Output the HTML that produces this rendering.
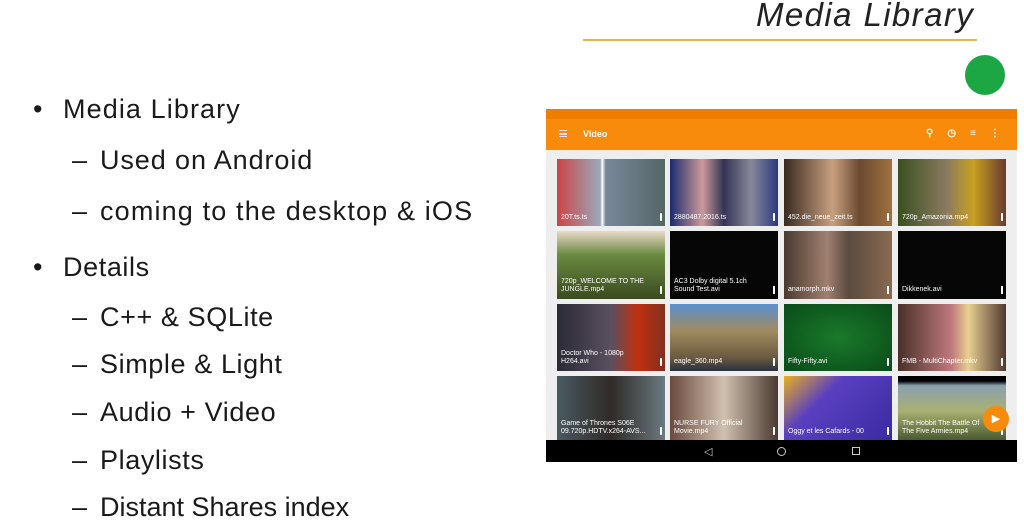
<!DOCTYPE html>
<html><head><meta charset="utf-8"><style>
*{margin:0;padding:0;box-sizing:border-box}
body{width:1024px;height:532px;background:#fff;position:relative;overflow:hidden;font-family:"Liberation Sans",sans-serif;color:#1a1a1a}
.t{position:absolute;white-space:nowrap;font-size:27px;line-height:1;letter-spacing:0.6px}
.title{position:absolute;left:756px;top:-4px;font-size:33px;font-style:italic;color:#222;white-space:nowrap;letter-spacing:1.4px}
.ph{position:absolute;left:546px;top:109px;width:471px;height:353px;background:#eeeeee;overflow:hidden}
.tile{position:absolute;width:108px;overflow:hidden}
.tile span{position:absolute;left:4px;color:#fff;font-size:7px;line-height:8px}
.tile i{position:absolute;right:3px;bottom:5px;width:2px;height:8px;border-top:2px dotted #fff;border-bottom:2px dotted #fff;border-left:2px solid #fff}
</style></head><body>
<div class="title">Media Library</div>
<div style="position:absolute;left:583px;top:39px;width:394px;height:2px;background:#e8b450"></div>
<div style="position:absolute;left:965px;top:55px;width:40px;height:40px;border-radius:50%;background:#1ca744"></div>

<div class="t" style="left:33px;top:96px">•</div><div class="t" style="left:63px;top:96px;letter-spacing:1.1px">Media Library</div>
<div class="t" style="left:72px;top:147px">–</div><div class="t" style="left:100px;top:147px;letter-spacing:0.9px">Used on Android</div>
<div class="t" style="left:72px;top:198px">–</div><div class="t" style="left:100px;top:198px;letter-spacing:1.15px">coming to the desktop &amp; iOS</div>
<div class="t" style="left:33px;top:254px">•</div><div class="t" style="left:63px;top:254px">Details</div>
<div class="t" style="left:72px;top:304px">–</div><div class="t" style="left:100px;top:304px">C++ &amp; SQLite</div>
<div class="t" style="left:72px;top:351px">–</div><div class="t" style="left:100px;top:351px">Simple &amp; Light</div>
<div class="t" style="left:72px;top:399px">–</div><div class="t" style="left:100px;top:399px">Audio + Video</div>
<div class="t" style="left:72px;top:447px">–</div><div class="t" style="left:100px;top:447px">Playlists</div>
<div class="t" style="left:72px;top:494px">–</div><div class="t" style="left:100px;top:494px;letter-spacing:0">Distant Shares index</div>

<div class="ph">
<div style="position:absolute;left:0;top:0;width:471px;height:10px;background:#f07c00"></div>
<div style="position:absolute;left:0;top:10px;width:471px;height:31px;background:#f88a0c"></div>
<div style="position:absolute;left:13px;top:21px;width:8px;height:7px;border-top:1.5px solid #fde;border-bottom:1.5px solid #fde"></div>
<div style="position:absolute;left:13px;top:24px;width:8px;height:1.5px;background:#fde"></div>
<div style="position:absolute;left:37px;top:20px;color:#fff;font-size:9px;font-weight:bold">Video</div>
<div style="position:absolute;left:380px;top:19px;color:#fff;font-size:10px;font-weight:bold;letter-spacing:14px">⚲◷≡⋮</div>

<div class="tile" style="left:11px;top:50px;height:67px;background:linear-gradient(90deg,#c44 0,#9ab 40%,#fff 42%,#789 45%,#566 100%)"><span style="bottom:4px">20T.ts.ts</span><i></i></div>
<div class="tile" style="left:124px;top:50px;height:67px;background:linear-gradient(90deg,#1a2a70,#c99 30%,#335 50%,#889 75%,#2a3a80)"><span style="bottom:4px">2880487.2016.ts</span><i></i></div>
<div class="tile" style="left:238px;top:50px;height:67px;background:linear-gradient(90deg,#3a2a20,#c8a080 45%,#6a4a30 70%,#a07040)"><span style="bottom:4px">452.die_neue_zeit.ts</span><i></i></div>
<div class="tile" style="left:352px;top:50px;height:67px;background:linear-gradient(90deg,#3a5020,#8a7a60 45%,#c8a020 70%,#6a3a30)"><span style="bottom:4px">720p_Amazonia.mp4</span><i></i></div>

<div class="tile" style="left:11px;top:122px;height:68px;background:linear-gradient(180deg,#e8d8c8 0,#6a8a40 35%,#3a4a20 100%)"><span style="bottom:5px">720p_WELCOME TO THE<br>JUNGLE.mp4</span><i></i></div>
<div class="tile" style="left:124px;top:122px;height:68px;background:#060606"><span style="bottom:5px">AC3 Dolby digital 5.1ch<br>Sound Test.avi</span><i></i></div>
<div class="tile" style="left:238px;top:122px;height:68px;background:linear-gradient(90deg,#4a3a30,#a08070 40%,#5a4a40 60%,#8a6a50)"><span style="bottom:5px">anamorph.mkv</span><i></i></div>
<div class="tile" style="left:352px;top:122px;height:68px;background:#060606"><span style="bottom:5px">Dikkenek.avi</span><i></i></div>

<div class="tile" style="left:11px;top:195px;height:67px;background:linear-gradient(90deg,#2a2a35,#5a5060 50%,#c03010 75%,#803020)"><span style="bottom:5px">Doctor Who - 1080p<br>H264.avi</span><i></i></div>
<div class="tile" style="left:124px;top:195px;height:67px;background:linear-gradient(180deg,#5a90d0,#a08a60 40%,#6a5a40 80%,#2a3040)"><span style="bottom:5px">eagle_360.mp4</span><i></i></div>
<div class="tile" style="left:238px;top:195px;height:67px;background:radial-gradient(#1a7a2a,#0a4a1a)"><span style="bottom:5px">Fifty-Fifty.avi</span><i></i></div>
<div class="tile" style="left:352px;top:195px;height:67px;background:linear-gradient(90deg,#4a3028,#c07a80 50%,#e8d090 65%,#503830)"><span style="bottom:5px">FMB - MultiChapter.mkv</span><i></i></div>

<div class="tile" style="left:11px;top:267px;height:64px;background:linear-gradient(90deg,#4a5a60,#302a28 50%,#6a7a80)"><span style="bottom:4px">Game of Thrones S06E<br>09.720p.HDTV.x264-AVS...</span><i></i></div>
<div class="tile" style="left:124px;top:267px;height:64px;background:linear-gradient(90deg,#6a4a40,#d0c0b0 50%,#4a3a30)"><span style="bottom:4px">NURSE FURY Official<br>Movie.mp4</span><i></i></div>
<div class="tile" style="left:238px;top:267px;height:64px;background:linear-gradient(135deg,#e8b020 0,#5a40c0 35%,#3a2aa0 100%)"><span style="bottom:4px">Oggy et les Cafards - 00</span><i></i></div>
<div class="tile" style="left:352px;top:267px;height:64px;background:linear-gradient(180deg,#000 0,#000 8%,#8aa0b0 15%,#aab070 55%,#4a5a30)"><span style="bottom:4px">The Hobbit The Battle Of<br>The Five Armies.mp4</span><i></i></div>
<div style="position:absolute;left:437px;top:297px;width:26px;height:26px;border-radius:50%;background:#f88a0c;color:#fff;font-size:11px;text-align:center;line-height:26px">▶</div>

<div style="position:absolute;left:0;top:331px;width:471px;height:22px;background:#000"></div>
<div style="position:absolute;left:158px;top:336px;color:#ccc;font-size:11px">◁</div>
<div style="position:absolute;left:231px;top:338px;width:9px;height:9px;border:1.5px solid #ccc;border-radius:50%"></div>
<div style="position:absolute;left:306px;top:338px;width:8px;height:8px;border:1.5px solid #ccc"></div>
</div>
</body></html>
